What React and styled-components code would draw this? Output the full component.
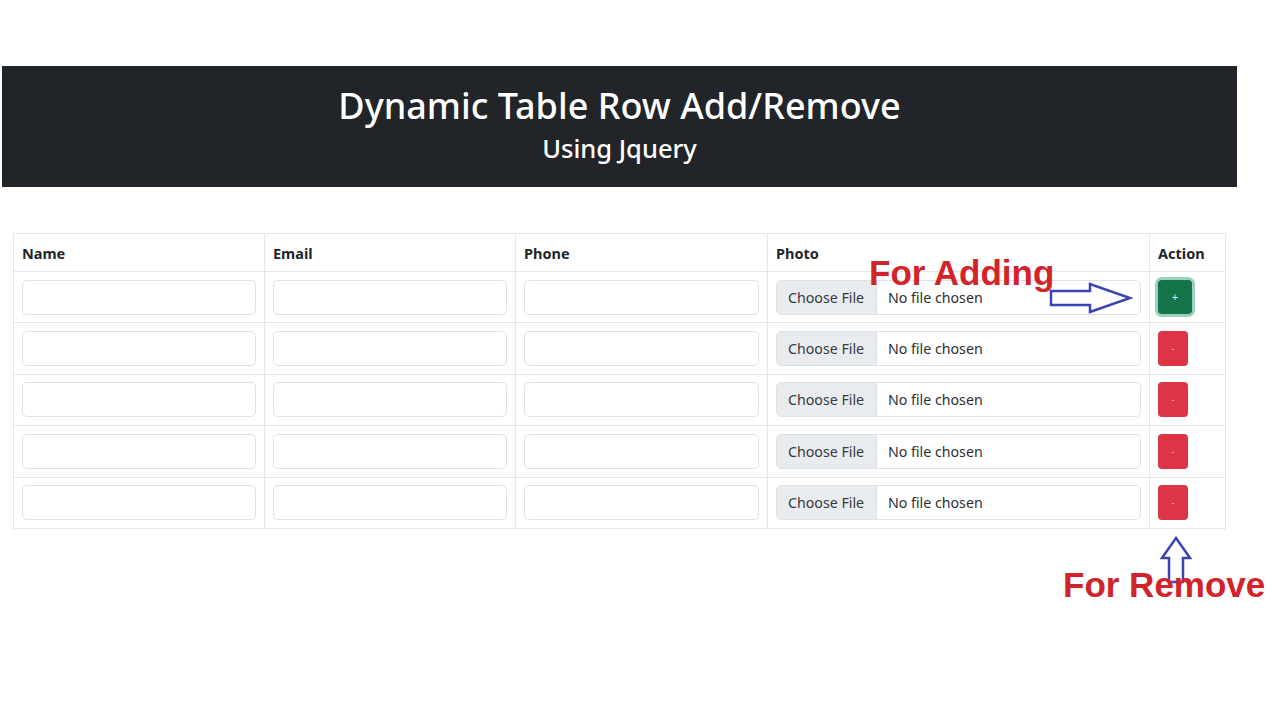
import React from "react";
import styled, { createGlobalStyle } from "styled-components";

const GlobalStyle = createGlobalStyle`
  body {
    margin: 0;
    background: #fff;
    font-family: "Noto Sans", "Open Sans", sans-serif;
    color: #212529;
  }
`;

const rows = [
  { id: 1, first: true },
  { id: 2 },
  { id: 3 },
  { id: 4 },
  { id: 5 },
];

const App = () => {
  return (
    <Page>
      <GlobalStyle />
      <Header>
        <h1>Dynamic Table Row Add/Remove</h1>
        <h2>Using Jquery</h2>
      </Header>

      <TableWrap>
        <Table>
          <colgroup>
            <col style={{ width: 251 }} />
            <col style={{ width: 251 }} />
            <col style={{ width: 252 }} />
            <col style={{ width: 382 }} />
            <col style={{ width: 76 }} />
          </colgroup>
          <thead>
            <tr>
              <th>Name</th>
              <th>Email</th>
              <th>Phone</th>
              <th>Photo</th>
              <th>Action</th>
            </tr>
          </thead>
          <tbody>
            {rows.map((row) => (
              <tr key={row.id}>
                <td>
                  <TextInput type="text" />
                </td>
                <td>
                  <TextInput type="text" />
                </td>
                <td>
                  <TextInput type="text" />
                </td>
                <td>
                  <FileBox>
                    <ChooseButton>Choose File</ChooseButton>
                    <FileName>No file chosen</FileName>
                  </FileBox>
                </td>
                <td>
                  {row.first ? (
                    <ActionButton $add>+</ActionButton>
                  ) : (
                    <ActionButton>-</ActionButton>
                  )}
                </td>
              </tr>
            ))}
          </tbody>
        </Table>

        <Note $left={856} $top={22}>
          For Adding
        </Note>
        <RightArrow width="84" height="32" viewBox="0 0 84 32">
          <path
            d="M2 9 H41 V2 L81 16 L41 30 V23 H2 Z"
            fill="none"
            stroke="#3b43b5"
            strokeWidth="2.5"
            strokeLinejoin="miter"
          />
        </RightArrow>

        <UpArrow width="34" height="48" viewBox="0 0 34 48">
          <path
            d="M17 2 L31 22 H24 V46 H10 V22 H3 Z"
            fill="none"
            stroke="#3b43b5"
            strokeWidth="2.5"
          />
        </UpArrow>
        <Note $left={1050} $top={334}>
          For Remove
        </Note>
      </TableWrap>
    </Page>
  );
};

export default App;

const Page = styled.div`
  padding-top: 66px;
  min-height: 720px;
  box-sizing: border-box;
`;

const Header = styled.header`
  margin-left: 2px;
  width: 1235px;
  height: 121px;
  box-sizing: border-box;
  background-color: #212529;
  color: #fff;
  display: flex;
  flex-direction: column;
  align-items: center;
  justify-content: center;
  padding-bottom: 6px;

  h1 {
    margin: 0;
    font-size: 36px;
    font-weight: 500;
    line-height: 1.2;
  }

  h2 {
    margin: 6px 0 0;
    font-size: 25.5px;
    font-weight: 500;
    line-height: 1.2;
  }
`;

const TableWrap = styled.div`
  position: relative;
  margin: 46px 0 0 13px;
  width: 1212px;
`;

const Table = styled.table`
  width: 1212px;
  border-collapse: collapse;
  table-layout: fixed;

  th,
  td {
    border: 1px solid #e4e6e8;
    text-align: left;
    vertical-align: middle;
  }

  th {
    padding: 8px;
    height: 21px;
    font-size: 14.5px;
    font-weight: 700;
    color: #212529;
  }

  td {
    padding: 7.7px 8px;
    height: 35px;
  }
`;

const TextInput = styled.input`
  display: block;
  width: 100%;
  height: 35px;
  box-sizing: border-box;
  border: 1px solid #dee2e6;
  border-radius: 5px;
  background: #fff;
  padding: 6px 12px;
  font-family: inherit;
  font-size: 15px;
  outline: none;
`;

const FileBox = styled.div`
  display: flex;
  align-items: stretch;
  width: 100%;
  height: 35px;
  box-sizing: border-box;
  border: 1px solid #dee2e6;
  border-radius: 5px;
  overflow: hidden;
  font-size: 14.2px;
  color: #212529;
`;

const ChooseButton = styled.span`
  display: flex;
  align-items: center;
  width: 100px;
  box-sizing: border-box;
  padding: 0 11px;
  background-color: #e9ecef;
  border-right: 1px solid #dee2e6;
  color: #343a40;
  white-space: nowrap;
`;

const FileName = styled.span`
  display: flex;
  align-items: center;
  padding-left: 11px;
  white-space: nowrap;
  color: #2b2f33;
`;

const ActionButton = styled.button`
  display: block;
  width: ${(p) => (p.$add ? "34px" : "30px")};
  height: ${(p) => (p.$add ? "34px" : "35px")};
  border: none;
  border-radius: 4px;
  padding: 0;
  font-family: "Liberation Sans", sans-serif;
  font-size: 10px;
  color: ${(p) => (p.$add ? "#fff" : "#f3a0a8")};
  background-color: ${(p) => (p.$add ? "#15744a" : "#dc3545")};
  box-shadow: ${(p) => (p.$add ? "0 0 0 3px rgba(76, 170, 126, 0.55)" : "none")};
  cursor: pointer;
`;

const Note = styled.div`
  position: absolute;
  left: ${(p) => p.$left}px;
  top: ${(p) => p.$top}px;
  font-family: "Liberation Sans", Arial, sans-serif;
  font-size: 35px;
  font-weight: 700;
  line-height: 1;
  color: #d2232b;
  white-space: nowrap;
`;

const RightArrow = styled.svg`
  position: absolute;
  left: 1036px;
  top: 49px;
`;

const UpArrow = styled.svg`
  position: absolute;
  left: 1146px;
  top: 303px;
`;
